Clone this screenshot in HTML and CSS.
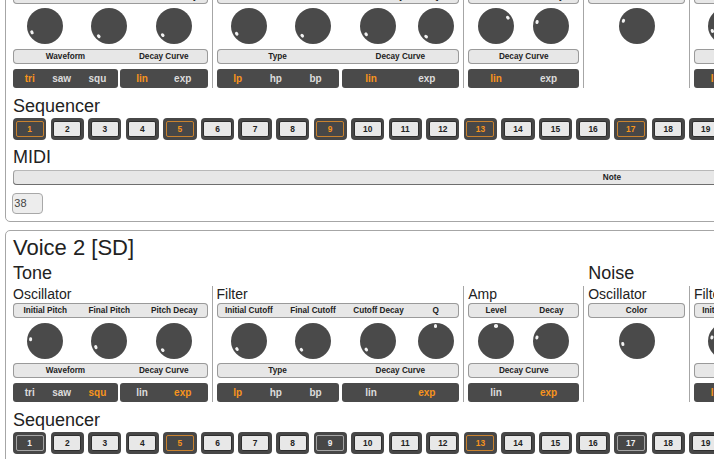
FILE: index.html
```html
<!DOCTYPE html>
<html>
<head>
<meta charset="utf-8">
<title>Drum Voices</title>
<link rel="stylesheet" href="styles.css">
</head>
<body>
<div class="page">

<section class="voice">
  <h2 class="voice-title">Voice 1 [BD]</h2>
  <div class="groups">
    <div class="group">
      <h3 class="group-title">Tone</h3>
      <div class="sections">
        <div class="sec osc">
          <h4>Oscillator</h4>
          <div class="labels kc"><span>Initial Pitch</span><span>Final Pitch</span><span>Pitch Decay</span></div>
          <div class="knobs kc">
            <div class="cell"><div class="knob" style="--a:-116deg"><i></i></div></div>
            <div class="cell"><div class="knob" style="--a:-135deg"><i></i></div></div>
            <div class="cell"><div class="knob" style="--a:-129deg"><i></i></div></div>
          </div>
          <div class="labels bc"><span>Waveform</span><span>Decay Curve</span></div>
          <div class="btnrow bc">
            <div class="btns"><b class="on">tri</b><b>saw</b><b>squ</b></div>
            <div class="btns"><b class="on">lin</b><b>exp</b></div>
          </div>
        </div>
        <div class="sec filter">
          <h4>Filter</h4>
          <div class="labels kc"><span>Initial Cutoff</span><span>Final Cutoff</span><span>Cutoff Decay</span><span>Q</span></div>
          <div class="knobs kc">
            <div class="cell"><div class="knob" style="--a:-122deg"><i></i></div></div>
            <div class="cell"><div class="knob" style="--a:-132deg"><i></i></div></div>
            <div class="cell"><div class="knob" style="--a:-125deg"><i></i></div></div>
            <div class="cell"><div class="knob" style="--a:-137deg"><i></i></div></div>
          </div>
          <div class="labels bc"><span>Type</span><span>Decay Curve</span></div>
          <div class="btnrow bc">
            <div class="btns"><b class="on">lp</b><b>hp</b><b>bp</b></div>
            <div class="btns"><b class="on">lin</b><b>exp</b></div>
          </div>
        </div>
        <div class="sec amp">
          <h4>Amp</h4>
          <div class="labels kc"><span>Level</span><span>Decay</span></div>
          <div class="knobs kc">
            <div class="cell"><div class="knob" style="--a:55deg"><i></i></div></div>
            <div class="cell"><div class="knob" style="--a:-74deg"><i></i></div></div>
          </div>
          <div class="labels bc"><span>Decay Curve</span></div>
          <div class="btnrow bc">
            <div class="btns"><b class="on">lin</b><b>exp</b></div>
          </div>
        </div>
      </div>
    </div>
    <div class="group noise">
      <h3 class="group-title">Noise</h3>
      <div class="sections">
        <div class="sec nosc">
          <h4>Oscillator</h4>
          <div class="labels kc"><span>Color</span></div>
          <div class="knobs kc">
            <div class="cell"><div class="knob" style="--a:-69deg"><i></i></div></div>
          </div>
        </div>
        <div class="sec filter">
          <h4>Filter</h4>
          <div class="labels kc"><span>Initial Cutoff</span><span>Final Cutoff</span><span>Cutoff Decay</span><span>Q</span></div>
          <div class="knobs kc">
            <div class="cell"><div class="knob" style="--a:-110deg"><i></i></div></div>
            <div class="cell"><div class="knob" style="--a:-130deg"><i></i></div></div>
            <div class="cell"><div class="knob" style="--a:-125deg"><i></i></div></div>
            <div class="cell"><div class="knob" style="--a:-135deg"><i></i></div></div>
          </div>
          <div class="labels bc"><span>Type</span><span>Decay Curve</span></div>
          <div class="btnrow bc">
            <div class="btns"><b class="on">lp</b><b>hp</b><b>bp</b></div>
            <div class="btns"><b class="on">lin</b><b>exp</b></div>
          </div>
        </div>
        <div class="sec amp">
          <h4>Amp</h4>
          <div class="labels kc"><span>Level</span><span>Decay</span></div>
          <div class="knobs kc">
            <div class="cell"><div class="knob" style="--a:0deg"><i></i></div></div>
            <div class="cell"><div class="knob" style="--a:-90deg"><i></i></div></div>
          </div>
          <div class="labels bc"><span>Decay Curve</span></div>
          <div class="btnrow bc">
            <div class="btns"><b class="on">lin</b><b>exp</b></div>
          </div>
        </div>
      </div>
    </div>
  </div>
  <h3 class="block-title seq">Sequencer</h3>
  <div class="steps">
    <div class="step on"><span>1</span></div><div class="step"><span>2</span></div><div class="step"><span>3</span></div><div class="step"><span>4</span></div>
    <div class="step on"><span>5</span></div><div class="step"><span>6</span></div><div class="step"><span>7</span></div><div class="step"><span>8</span></div>
    <div class="step on"><span>9</span></div><div class="step"><span>10</span></div><div class="step"><span>11</span></div><div class="step"><span>12</span></div>
    <div class="step on"><span>13</span></div><div class="step"><span>14</span></div><div class="step"><span>15</span></div><div class="step"><span>16</span></div>
    <div class="step on"><span>17</span></div><div class="step"><span>18</span></div><div class="step"><span>19</span></div><div class="step"><span>20</span></div>
    <div class="step on"><span>21</span></div><div class="step"><span>22</span></div><div class="step"><span>23</span></div><div class="step"><span>24</span></div>
    <div class="step on"><span>25</span></div><div class="step"><span>26</span></div><div class="step"><span>27</span></div><div class="step"><span>28</span></div>
    <div class="step on"><span>29</span></div><div class="step"><span>30</span></div><div class="step"><span>31</span></div><div class="step"><span>32</span></div>
  </div>
  <h3 class="block-title midi">MIDI</h3>
  <div class="labels note"><span>Note</span></div>
  <input class="num" type="text" value="38">
</section>

<section class="voice">
  <h2 class="voice-title">Voice 2 [SD]</h2>
  <div class="groups">
    <div class="group">
      <h3 class="group-title">Tone</h3>
      <div class="sections">
        <div class="sec osc">
          <h4>Oscillator</h4>
          <div class="labels kc"><span>Initial Pitch</span><span>Final Pitch</span><span>Pitch Decay</span></div>
          <div class="knobs kc">
            <div class="cell"><div class="knob" style="--a:-83deg"><i></i></div></div>
            <div class="cell"><div class="knob" style="--a:-115deg"><i></i></div></div>
            <div class="cell"><div class="knob" style="--a:-129deg"><i></i></div></div>
          </div>
          <div class="labels bc"><span>Waveform</span><span>Decay Curve</span></div>
          <div class="btnrow bc">
            <div class="btns"><b>tri</b><b>saw</b><b class="on">squ</b></div>
            <div class="btns"><b>lin</b><b class="on">exp</b></div>
          </div>
        </div>
        <div class="sec filter">
          <h4>Filter</h4>
          <div class="labels kc"><span>Initial Cutoff</span><span>Final Cutoff</span><span>Cutoff Decay</span><span>Q</span></div>
          <div class="knobs kc">
            <div class="cell"><div class="knob" style="--a:-124deg"><i></i></div></div>
            <div class="cell"><div class="knob" style="--a:-127deg"><i></i></div></div>
            <div class="cell"><div class="knob" style="--a:-126deg"><i></i></div></div>
            <div class="cell"><div class="knob" style="--a:0deg"><i></i></div></div>
          </div>
          <div class="labels bc"><span>Type</span><span>Decay Curve</span></div>
          <div class="btnrow bc">
            <div class="btns"><b class="on">lp</b><b>hp</b><b>bp</b></div>
            <div class="btns"><b>lin</b><b class="on">exp</b></div>
          </div>
        </div>
        <div class="sec amp">
          <h4>Amp</h4>
          <div class="labels kc"><span>Level</span><span>Decay</span></div>
          <div class="knobs kc">
            <div class="cell"><div class="knob" style="--a:0deg"><i></i></div></div>
            <div class="cell"><div class="knob" style="--a:-76deg"><i></i></div></div>
          </div>
          <div class="labels bc"><span>Decay Curve</span></div>
          <div class="btnrow bc">
            <div class="btns"><b>lin</b><b class="on">exp</b></div>
          </div>
        </div>
      </div>
    </div>
    <div class="group noise">
      <h3 class="group-title">Noise</h3>
      <div class="sections">
        <div class="sec nosc">
          <h4>Oscillator</h4>
          <div class="labels kc"><span>Color</span></div>
          <div class="knobs kc">
            <div class="cell"><div class="knob" style="--a:-102deg"><i></i></div></div>
          </div>
        </div>
        <div class="sec filter">
          <h4>Filter</h4>
          <div class="labels kc"><span>Initial Cutoff</span><span>Final Cutoff</span><span>Cutoff Decay</span><span>Q</span></div>
          <div class="knobs kc">
            <div class="cell"><div class="knob" style="--a:-76deg"><i></i></div></div>
            <div class="cell"><div class="knob" style="--a:-120deg"><i></i></div></div>
            <div class="cell"><div class="knob" style="--a:-125deg"><i></i></div></div>
            <div class="cell"><div class="knob" style="--a:-40deg"><i></i></div></div>
          </div>
          <div class="labels bc"><span>Type</span><span>Decay Curve</span></div>
          <div class="btnrow bc">
            <div class="btns"><b class="on">lp</b><b>hp</b><b>bp</b></div>
            <div class="btns"><b class="on">lin</b><b>exp</b></div>
          </div>
        </div>
        <div class="sec amp">
          <h4>Amp</h4>
          <div class="labels kc"><span>Level</span><span>Decay</span></div>
          <div class="knobs kc">
            <div class="cell"><div class="knob" style="--a:20deg"><i></i></div></div>
            <div class="cell"><div class="knob" style="--a:-100deg"><i></i></div></div>
          </div>
          <div class="labels bc"><span>Decay Curve</span></div>
          <div class="btnrow bc">
            <div class="btns"><b class="on">lin</b><b>exp</b></div>
          </div>
        </div>
      </div>
    </div>
  </div>
  <h3 class="block-title seq">Sequencer</h3>
  <div class="steps">
    <div class="step cur"><span>1</span></div><div class="step"><span>2</span></div><div class="step"><span>3</span></div><div class="step"><span>4</span></div>
    <div class="step on"><span>5</span></div><div class="step"><span>6</span></div><div class="step"><span>7</span></div><div class="step"><span>8</span></div>
    <div class="step cur"><span>9</span></div><div class="step"><span>10</span></div><div class="step"><span>11</span></div><div class="step"><span>12</span></div>
    <div class="step on"><span>13</span></div><div class="step"><span>14</span></div><div class="step"><span>15</span></div><div class="step"><span>16</span></div>
    <div class="step cur"><span>17</span></div><div class="step"><span>18</span></div><div class="step"><span>19</span></div><div class="step"><span>20</span></div>
    <div class="step on"><span>21</span></div><div class="step"><span>22</span></div><div class="step"><span>23</span></div><div class="step"><span>24</span></div>
    <div class="step cur"><span>25</span></div><div class="step"><span>26</span></div><div class="step"><span>27</span></div><div class="step"><span>28</span></div>
    <div class="step on"><span>29</span></div><div class="step"><span>30</span></div><div class="step"><span>31</span></div><div class="step"><span>32</span></div>
  </div>
  <h3 class="block-title midi">MIDI</h3>
  <div class="labels note"><span>Note</span></div>
  <input class="num" type="text" value="38">
</section>

</div>
</body>
</html>
```

FILE: styles.css
```css
html, body {
  margin: 0;
  padding: 0;
  background: #fff;
  overflow: hidden;
}

body {
  font-family: "Liberation Sans", Arial, Helvetica, sans-serif;
  color: #222;
}

.page {
  display: flex;
  flex-direction: column;
  align-items: flex-start;
  gap: 7.8px;
  margin-top: -84.4px;
}

.voice {
  width: max-content;
  margin-left: 5px;
  border: 1px solid #a6a6a6;
  border-radius: 5px;
  padding: 4px 7px 7.4px 7px;
}

.voice-title {
  margin: 0;
  font-size: 22px;
  line-height: 25px;
  font-weight: normal;
}

.groups {
  display: flex;
  margin-top: 3.3px;
}

.group-title {
  margin: 0 0 1.7px 0;
  font-size: 18px;
  line-height: 21px;
  font-weight: normal;
}

.noise .group-title {
  padding-left: 5px;
}

.sections {
  display: flex;
}

.sec {
  padding: 0 4px;
  border-left: 1px solid #a6a6a6;
}

.group:first-child .sec:first-child {
  border-left: none;
  padding-left: 0;
}

.sec h4 {
  margin: 0;
  font-size: 14px;
  line-height: 16px;
  font-weight: normal;
}

/* column templates */
.osc { --kcols: 64.5px 63.5px 66.5px; --bcols: 105px 87.5px; --bgap: 2px; }
.filter { --kcols: 64.6px 63.8px 67.2px 47.1px; --bcols: 122px 117.7px; --bgap: 3px; }
.amp { --kcols: 55.5px 55.5px; --bcols: 111px; --bgap: 0px; }
.nosc { --kcols: 96.7px; }

.labels {
  display: grid;
  height: 15px;
  box-sizing: border-box;
  background: #e7e7e7;
  border-radius: 4px;
  box-shadow: inset 0 0 0 1px #9a9a9a;
  font-size: 8.2px;
  font-weight: bold;
  line-height: 15px;
  color: #222;
  text-align: center;
  white-space: nowrap;
}

.labels.kc {
  grid-template-columns: var(--kcols);
  margin-top: 1.5px;
}

.labels.bc {
  grid-template-columns: var(--bcols);
  column-gap: var(--bgap);
  margin-top: 4.5px;
}

.knobs {
  display: grid;
  grid-template-columns: var(--kcols);
  margin-top: 4.3px;
}

.cell {
  display: flex;
  justify-content: center;
}

.knob {
  position: relative;
  width: 36px;
  height: 36px;
  border-radius: 50%;
  background: #4a4a4a;
}

.knob i {
  position: absolute;
  inset: 0;
  transform: rotate(var(--a));
}

.knob i::after {
  content: "";
  position: absolute;
  left: 50%;
  top: 1.9px;
  width: 3.6px;
  height: 3.6px;
  margin-left: -1.8px;
  border-radius: 50%;
  background: #f2f2f2;
}

.btnrow {
  display: grid;
  grid-template-columns: var(--bcols);
  column-gap: var(--bgap);
  margin-top: 5px;
}

.btns {
  display: flex;
  height: 19px;
  padding: 0 3px;
  background: #4a4a4a;
  border-radius: 3px;
}

.btns b {
  flex: 1 1 auto;
  text-align: center;
  font-size: 10px;
  line-height: 19px;
  font-weight: bold;
  color: #dcdcdc;
}

.btns b.on {
  color: #f7941d;
}

.block-title {
  margin: 0;
  font-size: 18px;
  line-height: 21px;
  font-weight: normal;
}

.block-title.seq {
  margin-top: 8.2px;
}

.block-title.midi {
  margin-top: 6.6px;
}

.steps {
  display: flex;
  gap: 4.27px;
  margin-top: 1.2px;
}

.step {
  flex: none;
  width: 33.3px;
  height: 22px;
  box-sizing: border-box;
  padding: 3px 2.6px;
  background: #474747;
  border-radius: 4px;
}

.step span {
  display: block;
  height: 100%;
  box-sizing: border-box;
  border: 1px solid #2e2e2e;
  border-radius: 2px;
  background: #e8e8e8;
  font-size: 8.4px;
  line-height: 14px;
  font-weight: bold;
  text-align: center;
  color: #222;
}

.step.on span {
  background: #474747;
  border-color: #c9822f;
  color: #f7941d;
}

.step.cur span {
  background: #474747;
  border-color: #a5a5a5;
  color: #f0f0f0;
}

.labels.note {
  margin-top: 2.4px;
  box-shadow: inset 0 1px 0 #b8b8b8, inset 0 -1px 0 #6e6e6e, inset 1px 0 0 #9a9a9a, inset -1px 0 0 #9a9a9a;
}

.num {
  display: block;
  width: 31px;
  height: 21px;
  box-sizing: border-box;
  margin: 7.3px 0 0 -0.7px;
  padding: 0 1px;
  border: 1px solid #a8a8a8;
  border-radius: 4px;
  background: #ededed;
  font-family: "Liberation Sans", Arial, sans-serif;
  font-size: 11px;
  color: #444;
  outline: none;
}
```
